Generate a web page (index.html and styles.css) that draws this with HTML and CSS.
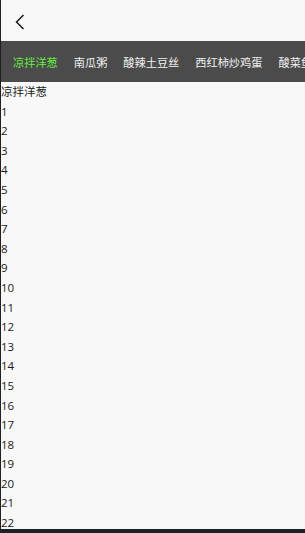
FILE: index.html
```html
<!DOCTYPE html>
<html lang="zh">
  <head>
    <meta charset="utf-8">
    <title>菜单</title>
    <link rel="stylesheet" href="styles.css">
  </head>
  <body>
    <div class="screen">
      <div class="toolbar">
        <svg class="back" width="10" height="16" viewBox="0 0 10 16">
          <path d="M8.5 1 L1.5 8 L8.5 15" fill="none" stroke="#111" stroke-width="1.4"/>
        </svg>
      </div>
      <div class="tabs">
        <span class="tab active">凉拌洋葱</span>
        <span class="tab">南瓜粥</span>
        <span class="tab">酸辣土豆丝</span>
        <span class="tab">西红柿炒鸡蛋</span>
        <span class="tab">酸菜鱼</span>
      </div>
      <div class="content">
        <div class="line">凉拌洋葱</div>
        <div class="line">1</div>
        <div class="line">2</div>
        <div class="line">3</div>
        <div class="line">4</div>
        <div class="line">5</div>
        <div class="line">6</div>
        <div class="line">7</div>
        <div class="line">8</div>
        <div class="line">9</div>
        <div class="line">10</div>
        <div class="line">11</div>
        <div class="line">12</div>
        <div class="line">13</div>
        <div class="line">14</div>
        <div class="line">15</div>
        <div class="line">16</div>
        <div class="line">17</div>
        <div class="line">18</div>
        <div class="line">19</div>
        <div class="line">20</div>
        <div class="line">21</div>
        <div class="line">22</div>
      </div>
    </div>
    <div class="navbar"></div>
  </body>
</html>
```

FILE: styles.css
```css
html, body {
  margin: 0;
  height: 100%;
}
body {
  display: flex;
  flex-direction: column;
  background: #1c2125;
  font-family: "Open Sans", "Noto Sans CJK SC", sans-serif;
  overflow: hidden;
}
.screen {
  flex: 1;
  display: flex;
  flex-direction: column;
  margin-left: 1px;
  background: #f8f8f8;
  overflow: hidden;
}
.toolbar {
  height: 41px;
  flex-shrink: 0;
  display: flex;
  align-items: center;
  padding-left: 14px;
}
.back {
  display: block;
  margin-top: 3px;
}
.tabs {
  height: 41px;
  flex-shrink: 0;
  display: flex;
  align-items: center;
  padding-left: 4px;
  background: #4b4b4b;
  white-space: nowrap;
  overflow: hidden;
}
.tab {
  padding: 0 8px;
  font-size: 11.2px;
  color: #f2f2f2;
  flex-shrink: 0;
}
.tab.active {
  color: #66ee44;
}
.content {
  flex: 1;
  overflow: hidden;
  color: #1a1a1a;
  font-size: 11.5px;
}
.line {
  line-height: 19.6px;
  height: 19.6px;
}
.navbar {
  height: 4px;
  flex-shrink: 0;
}
```
